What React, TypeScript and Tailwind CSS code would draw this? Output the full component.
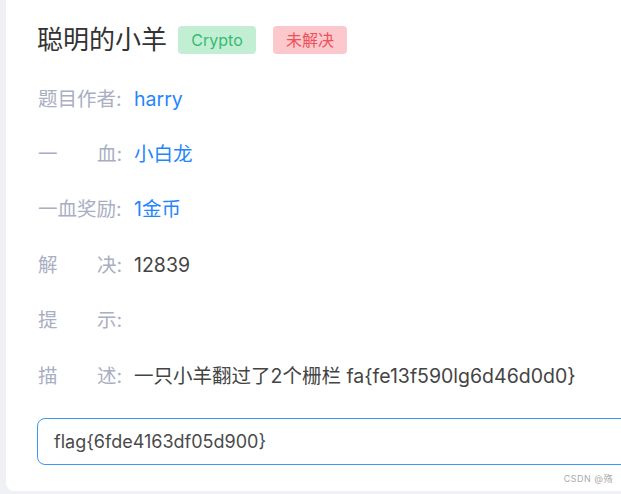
const rows = [
  { label: ['题目作者:'], value: 'harry', blue: true },
  { label: ['一', '血:'], value: '小白龙', blue: true },
  { label: ['一血奖励:'], value: '1金币', blue: true },
  { label: ['解', '决:'], value: '12839', blue: false },
  { label: ['提', '示:'], value: '', blue: false },
  { label: ['描', '述:'], value: '一只小羊翻过了2个栅栏 fa{fe13f590lg6d46d0d0}', blue: false },
]

export default function App() {
  return (
    <div className="w-[621px] h-[494px] overflow-hidden bg-[#f0f1f4] pl-[6px] font-['Inter','Noto_Sans_CJK_SC',sans-serif]">
      {/* 卡片 */}
      <div className="relative h-[491px] bg-white rounded-bl-[8px] pl-[31px] pt-[21px]">
        <div className="flex items-center h-[38px]">
          <h1 className="text-[26px] leading-none text-[#333333]">聪明的小羊</h1>
          <span className="ml-[11px] h-[28px] w-[78px] flex items-center justify-center rounded-[4px] bg-[#c2efd4] text-[16px] text-[#35bb70]">
            Crypto
          </span>
          <span className="ml-[17px] h-[28px] w-[74px] flex items-center justify-center rounded-[4px] bg-[#fbc8cb] text-[16px] text-[#ef5159]">
            未解决
          </span>
        </div>

        <div className="mt-[12.5px] pl-[1px]">
          {rows.map((row, i) => (
            <div key={i} className="flex items-center h-[55.4px] text-[19.5px]">
              <div className="w-[84px] flex justify-between text-[#a9aec3]">
                {row.label.map((t) => (
                  <span key={t}>{t}</span>
                ))}
              </div>
              <span className={`ml-[12px] ${row.blue ? 'text-[#1f86ff]' : 'text-[#444444]'}`}>
                {row.value}
              </span>
            </div>
          ))}
        </div>

        <div className="mt-[14px] h-[47px] w-[600px] flex items-center border border-[#3d97f5] rounded-[8px] pl-[16px] text-[18px] text-[#4a4a4a]">
          flag{'{'}6fde4163df05d900{'}'}
        </div>

        <p className="absolute right-[8px] bottom-[6px] text-[9px] text-[#aaaaaa] tracking-[0.5px]">CSDN @殇</p>
      </div>
    </div>
  )
}
